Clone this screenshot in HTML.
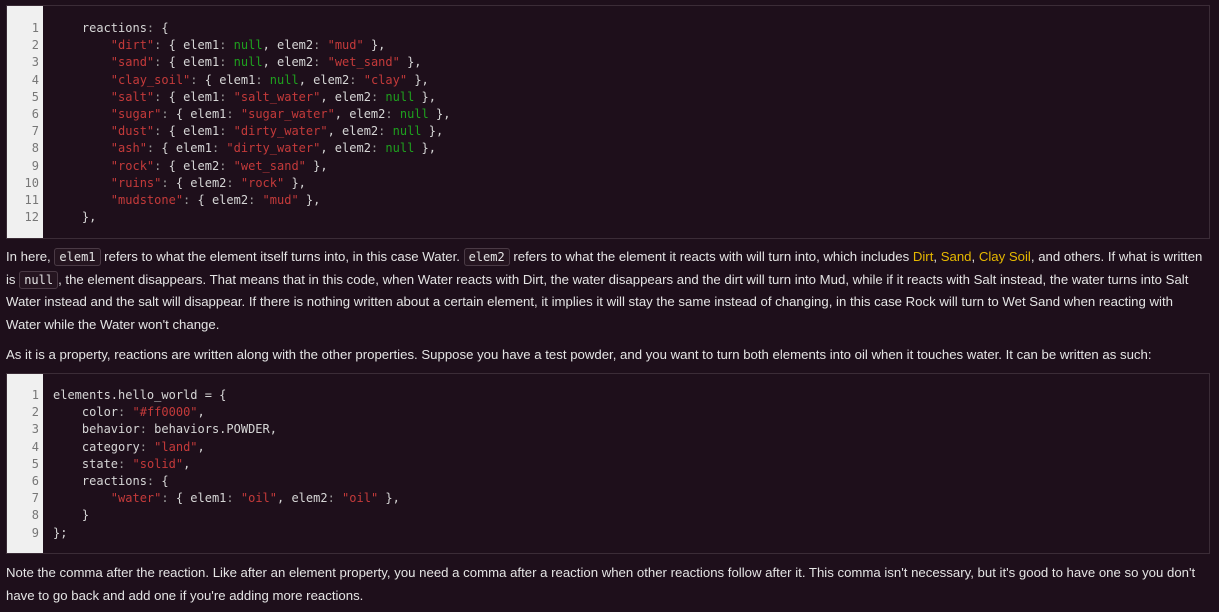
<!DOCTYPE html>
<html><head><meta charset="utf-8"><style>
body{margin:0;background:#1e0f1b;width:1219px;height:612px;overflow:hidden;font-family:"Liberation Sans",Arial,sans-serif;color:#e4e4e4;position:relative}
.cb{position:absolute;left:6px;width:1202px;border:1px solid #3b2c37;background:#1e0f1b}
.g{position:absolute;left:0;top:0;bottom:0;width:36px;background:#f0f0f0}
.ln{position:absolute;font-family:"DejaVu Sans Mono","Liberation Mono",monospace;font-size:12px;line-height:17.2px;white-space:pre;color:#d6d6d6}
.num{position:absolute;width:32px;text-align:right;left:0;color:#777;font-family:"DejaVu Sans Mono","Liberation Mono",monospace;font-size:12px;line-height:17.2px}
.s{color:#c43a3a}.n{color:#1ea01e}.p{color:#999}
.t{position:absolute;left:6px;font-size:13.2px;white-space:nowrap;line-height:22px}
code{font-family:"DejaVu Sans Mono","Liberation Mono",monospace;font-size:12px;border:1px solid #4a3a45;border-radius:3px;padding:1px 4px;background:#251520}
.y{color:#e6b800}
</style></head><body>
<div class="cb" style="top:5px;height:232px"><div class="g"></div>
<div class="num" style="top:14px">1<br>2<br>3<br>4<br>5<br>6<br>7<br>8<br>9<br>10<br>11<br>12</div>
<div class="ln" style="left:46px;top:14px">    reactions<span class="p">:</span> {
        <span class="s">"dirt"</span><span class="p">:</span> { elem1<span class="p">:</span> <span class="n">null</span>, elem2<span class="p">:</span> <span class="s">"mud"</span> },
        <span class="s">"sand"</span><span class="p">:</span> { elem1<span class="p">:</span> <span class="n">null</span>, elem2<span class="p">:</span> <span class="s">"wet_sand"</span> },
        <span class="s">"clay_soil"</span><span class="p">:</span> { elem1<span class="p">:</span> <span class="n">null</span>, elem2<span class="p">:</span> <span class="s">"clay"</span> },
        <span class="s">"salt"</span><span class="p">:</span> { elem1<span class="p">:</span> <span class="s">"salt_water"</span>, elem2<span class="p">:</span> <span class="n">null</span> },
        <span class="s">"sugar"</span><span class="p">:</span> { elem1<span class="p">:</span> <span class="s">"sugar_water"</span>, elem2<span class="p">:</span> <span class="n">null</span> },
        <span class="s">"dust"</span><span class="p">:</span> { elem1<span class="p">:</span> <span class="s">"dirty_water"</span>, elem2<span class="p">:</span> <span class="n">null</span> },
        <span class="s">"ash"</span><span class="p">:</span> { elem1<span class="p">:</span> <span class="s">"dirty_water"</span>, elem2<span class="p">:</span> <span class="n">null</span> },
        <span class="s">"rock"</span><span class="p">:</span> { elem2<span class="p">:</span> <span class="s">"wet_sand"</span> },
        <span class="s">"ruins"</span><span class="p">:</span> { elem2<span class="p">:</span> <span class="s">"rock"</span> },
        <span class="s">"mudstone"</span><span class="p">:</span> { elem2<span class="p">:</span> <span class="s">"mud"</span> },
    },</div>
</div>
<div class="t" style="top:246px">In here, <code>elem1</code> refers to what the element itself turns into, in this case Water. <code>elem2</code> refers to what the element it reacts with will turn into, which includes <span class="y">Dirt</span>, <span class="y">Sand</span>, <span class="y">Clay Soil</span>, and others. If what is written</div>
<div class="t" style="top:269px">is <code>null</code>, the element disappears. That means that in this code, when Water reacts with Dirt, the water disappears and the dirt will turn into Mud, while if it reacts with Salt instead, the water turns into Salt</div>
<div class="t" style="top:291px">Water instead and the salt will disappear. If there is nothing written about a certain element, it implies it will stay the same instead of changing, in this case Rock will turn to Wet Sand when reacting with</div>
<div class="t" style="top:314px">Water while the Water won't change.</div>
<div class="t" style="top:344px">As it is a property, reactions are written along with the other properties. Suppose you have a test powder, and you want to turn both elements into oil when it touches water. It can be written as such:</div>
<div class="cb" style="top:373px;height:179px"><div class="g"></div>
<div class="num" style="top:13px">1<br>2<br>3<br>4<br>5<br>6<br>7<br>8<br>9</div>
<div class="ln" style="left:46px;top:13px">elements.hello_world = {
    color<span class="p">:</span> <span class="s">"#ff0000"</span>,
    behavior<span class="p">:</span> behaviors.POWDER,
    category<span class="p">:</span> <span class="s">"land"</span>,
    state<span class="p">:</span> <span class="s">"solid"</span>,
    reactions<span class="p">:</span> {
        <span class="s">"water"</span><span class="p">:</span> { elem1<span class="p">:</span> <span class="s">"oil"</span>, elem2<span class="p">:</span> <span class="s">"oil"</span> },
    }
};</div>
</div>
<div class="t" style="top:562px">Note the comma after the reaction. Like after an element property, you need a comma after a reaction when other reactions follow after it. This comma isn't necessary, but it's good to have one so you don't</div>
<div class="t" style="top:585px">have to go back and add one if you're adding more reactions.</div>
</body></html>
